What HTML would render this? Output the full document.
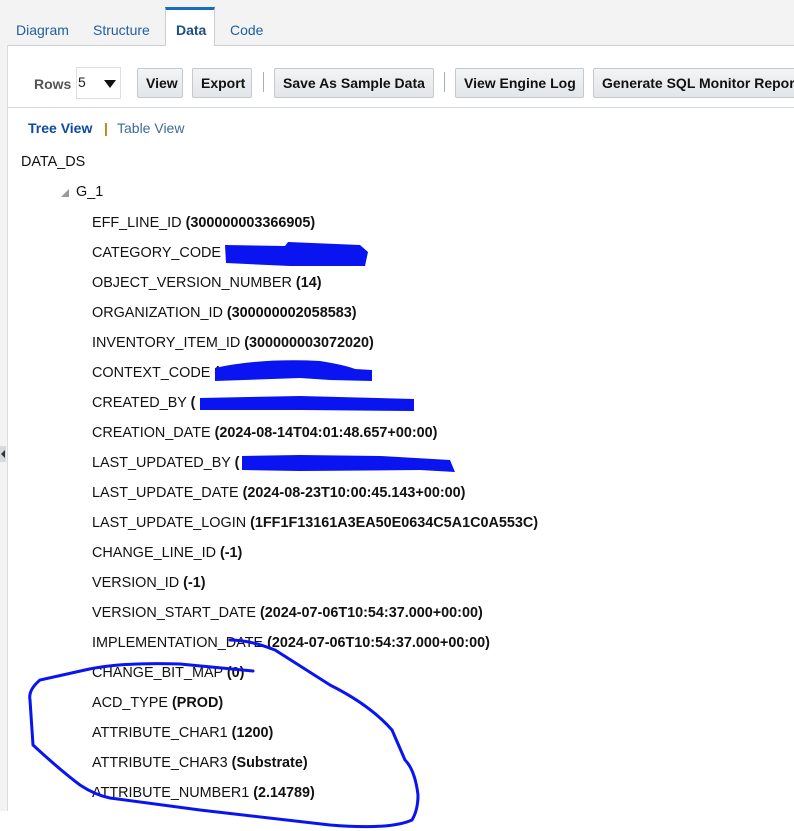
<!DOCTYPE html>
<html><head><style>
body{margin:0;width:794px;height:831px;position:relative;background:#fff;font-family:"Liberation Sans",sans-serif;overflow:hidden;color:#222}
.top{position:absolute;left:0;top:0;width:794px;height:45px;background:#f3f3f3;border-bottom:1px solid #c9cfd5}
.lstrip{position:absolute;left:0;top:45px;width:7px;height:766px;background:#f3f3f3;border-right:1px solid #d8dcdf}
.tab{position:absolute;top:22px;font-size:14px;color:#1f5f9f}
.dtab{position:absolute;left:165px;top:7px;width:50px;height:39px;background:#fff;border:1px solid #c9cfd5;border-top:3px solid #1a6bc6;border-bottom:none;box-sizing:border-box}
.btn{position:absolute;top:68px;height:30px;box-sizing:border-box;border:1px solid #c4c9ce;border-radius:2px;background:linear-gradient(#f2f4f5,#e3e6e9);font-size:14px;font-weight:bold;color:#111;line-height:28px;padding-left:8px;white-space:nowrap;overflow:hidden}
.sep{position:absolute;top:72px;width:1px;height:20px;background:#a8aeb4}
.row{position:absolute;left:92px;font-size:14.4px;color:#111;white-space:nowrap}
.row b{color:#111}
</style></head><body>
<div class="top"></div>
<div class="lstrip"></div>
<div style="position:absolute;left:0;top:446px;width:6px;height:16px;background:#d6dade"></div>
<div style="position:absolute;left:1px;top:450px;width:0;height:0;border-top:4px solid transparent;border-bottom:4px solid transparent;border-right:4px solid #333"></div>
<div class="tab" style="left:16px">Diagram</div>
<div class="tab" style="left:93px">Structure</div>
<div class="dtab"></div>
<div class="tab" style="left:176px;font-weight:bold;color:#1c4f85">Data</div>
<div class="tab" style="left:230px">Code</div>

<div style="position:absolute;left:34px;top:76px;font-size:14px;font-weight:bold;color:#555">Rows</div>
<div style="position:absolute;left:76px;top:67px;width:45px;height:32px;box-sizing:border-box;border:1px solid #dde0e3;background:#fff;font-size:14px;padding:6px 1px">5</div>
<div style="position:absolute;left:104px;top:80px;width:0;height:0;border-left:6px solid transparent;border-right:6px solid transparent;border-top:8px solid #111"></div>
<div class="btn" style="left:137px;width:46px">View</div>
<div class="btn" style="left:192px;width:60px">Export</div>
<div class="sep" style="left:263px"></div>
<div class="btn" style="left:274px;width:160px">Save As Sample Data</div>
<div class="sep" style="left:444px"></div>
<div class="btn" style="left:455px;width:129px">View Engine Log</div>
<div class="btn" style="left:593px;width:220px">Generate SQL Monitor Report</div>
<div style="position:absolute;left:8px;top:107px;width:786px;height:1px;background:#d6dbe0"></div>

<div style="position:absolute;left:28px;top:120px;font-size:14px;font-weight:bold;color:#0c4aa0">Tree View</div>
<div style="position:absolute;left:104px;top:120px;font-size:14px;font-weight:bold;color:#c67a00">|</div>
<div style="position:absolute;left:117px;top:120px;font-size:14px;color:#3d6c9a">Table View</div>
<div class="row" style="left:21px;top:154px">DATA_DS</div>
<div style="position:absolute;left:61px;top:189px;width:0;height:0;border-left:8px solid transparent;border-bottom:8px solid #999"></div>
<div class="row" style="left:76px;top:184px">G_1</div>

<div class="row" style="top:215px">EFF_LINE_ID <b>(300000003366905)</b></div>
<div class="row" style="top:245px">CATEGORY_CODE <b>(</b></div>
<div class="row" style="top:275px">OBJECT_VERSION_NUMBER <b>(14)</b></div>
<div class="row" style="top:305px">ORGANIZATION_ID <b>(300000002058583)</b></div>
<div class="row" style="top:335px">INVENTORY_ITEM_ID <b>(300000003072020)</b></div>
<div class="row" style="top:365px">CONTEXT_CODE <b>(</b></div>
<div class="row" style="top:395px">CREATED_BY <b>(</b></div>
<div class="row" style="top:425px">CREATION_DATE <b>(2024-08-14T04:01:48.657+00:00)</b></div>
<div class="row" style="top:455px">LAST_UPDATED_BY <b>(</b></div>
<div class="row" style="top:485px">LAST_UPDATE_DATE <b>(2024-08-23T10:00:45.143+00:00)</b></div>
<div class="row" style="top:515px">LAST_UPDATE_LOGIN <b>(1FF1F13161A3EA50E0634C5A1C0A553C)</b></div>
<div class="row" style="top:545px">CHANGE_LINE_ID <b>(-1)</b></div>
<div class="row" style="top:575px">VERSION_ID <b>(-1)</b></div>
<div class="row" style="top:605px">VERSION_START_DATE <b>(2024-07-06T10:54:37.000+00:00)</b></div>
<div class="row" style="top:635px">IMPLEMENTATION_DATE <b>(2024-07-06T10:54:37.000+00:00)</b></div>
<div class="row" style="top:665px">CHANGE_BIT_MAP <b>(0)</b></div>
<div class="row" style="top:695px">ACD_TYPE <b>(PROD)</b></div>
<div class="row" style="top:725px">ATTRIBUTE_CHAR1 <b>(1200)</b></div>
<div class="row" style="top:755px">ATTRIBUTE_CHAR3 <b>(Substrate)</b></div>
<div class="row" style="top:785px">ATTRIBUTE_NUMBER1 <b>(2.14789)</b></div>

<svg style="position:absolute;left:0;top:0" width="794" height="831">
<g fill="#0a14f0">
<path d="M225 245 L285 246 L288 242 L360 245 L368 252 L365 266 L290 266 L226 263 Z"/>
<path d="M215 368 Q260 358 320 361 Q345 365 355 369 L372 370 L372 381 L330 380 L300 378 L215 381 Z"/>
<path d="M200 398 L300 396 L414 399 L414 411 L300 410 L200 410 Z"/>
<path d="M242 456 L300 455 L380 456 L450 460 L455 472 L420 470 L300 471 L242 470 Z"/>
</g>
<path d="M253 671 L180 664 Q120 662 85 670 L40 680 Q28 690 30 700 L33 745 Q60 770 80 785 Q95 795 110 798 L200 810 L330 825 Q390 830 412 820 Q418 810 418 795 Q415 770 405 760 L392 730 Q370 705 330 685 L275 650 Q250 640 230 640" fill="none" stroke="#0a14f0" stroke-width="3" stroke-linecap="round"/>
</svg>
</body></html>
